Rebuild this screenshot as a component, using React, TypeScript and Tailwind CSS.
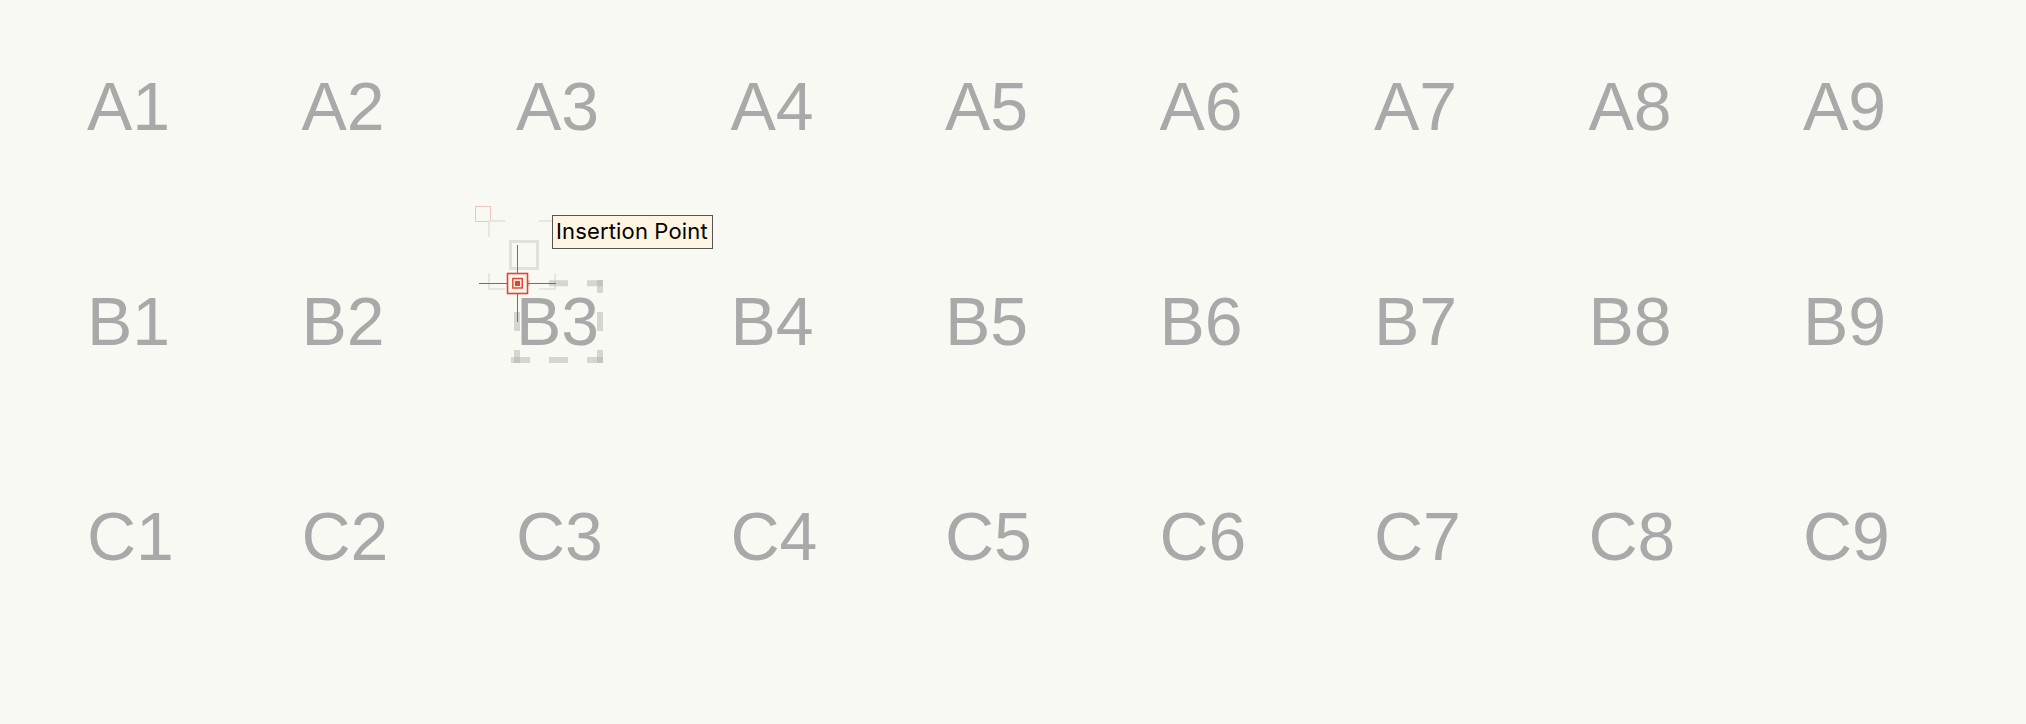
const rows = ["A", "B", "C"];
const cols = [1, 2, 3, 4, 5, 6, 7, 8, 9];

const RED = "#e5432f";

const CursorOverlay = () => {
  return (
    <svg
      className="absolute inset-0 pointer-events-none"
      width={2026}
      height={724}
      viewBox="0 0 2026 724"
    >
      {/* previous snap position */}
      <rect x={475.5} y={206.5} width={15} height={15} fill="none" stroke="#f3c3c0" strokeWidth={1} />
      <path
        d="M489 237V221H505 M539 221H555V237 M489 273V289H505 M539 289H555V273"
        fill="none"
        stroke="#e7e7e1"
        strokeWidth={2}
      />
      <rect x={510.5} y={241.5} width={27} height={27} fill="none" stroke="#e1e1db" strokeWidth={3} />

      {/* dashed selection box */}
      <g stroke="#b1b1ad" strokeOpacity={0.5} strokeWidth={6} strokeDasharray="19 19">
        <line x1={511} y1={283.3} x2={603} y2={283.3} />
        <line x1={511} y1={360} x2={603} y2={360} />
        <line x1={517} y1={280} x2={517} y2={363} strokeDashoffset={6} />
        <line x1={600} y1={280} x2={600} y2={363} strokeDashoffset={6} />
      </g>

      {/* crosshair */}
      <line x1={517.5} y1={245} x2={517.5} y2={322} stroke={RED} strokeWidth={1} />
      <line x1={479} y1={283.5} x2={556} y2={283.5} stroke={RED} strokeWidth={1} />
      <rect x={507.5} y={273.5} width={20} height={20} fill="#f6f6f1" stroke={RED} strokeWidth={1.6} />
      <rect x={512.8} y={278.5} width={9.5} height={9.5} fill="#e8e8e3" stroke={RED} strokeWidth={1.4} />
      <rect x={515} y={281} width={5} height={5} fill={RED} />
    </svg>
  );
};

export default function App() {
  return (
    <div className="relative w-full h-[724px] overflow-hidden bg-[#f9f9f4] font-['Liberation_Sans',Arial,sans-serif]">
      <div className="grid grid-cols-[repeat(9,214.5px)] auto-rows-[215px] pt-[72px] pl-[87px]">
        {rows.map((r) =>
          cols.map((c) => (
            <div key={r + c} className="text-[68px] leading-none text-[#a9a9a9] whitespace-nowrap">
              {r}
              {c}
            </div>
          ))
        )}
      </div>

      <CursorOverlay />

      <div className="absolute left-[552px] top-[215px] h-[34px] w-[161px] border border-[#555555] bg-[#fdf5e2] pl-[3px] text-[22px] tracking-[0.15px] leading-[31px] text-black whitespace-nowrap font-['Inter','Liberation_Sans',sans-serif]">
        Insertion Point
      </div>
    </div>
  );
}
